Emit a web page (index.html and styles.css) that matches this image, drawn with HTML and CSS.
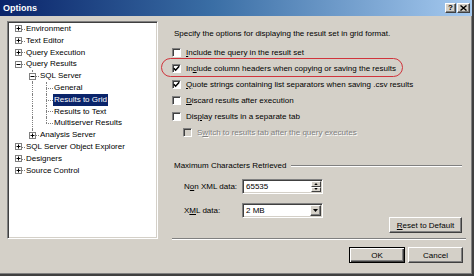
FILE: index.html
```html
<!DOCTYPE html>
<html>
<head>
<meta charset="utf-8">
<title>Options</title>
<link rel="stylesheet" href="styles.css">
</head>
<body>
<div class="window">
  <div class="titlebar">
    <span class="title">Options</span>
    <div class="tbtns">
      <span class="tbtn help">?</span>
      <span class="tbtn close"><svg width="7" height="6" viewBox="0 0 7 6"><path d="M0.5 0.5L6.5 5.5M6.5 0.5L0.5 5.5" stroke="#000" stroke-width="1.4"/></svg></span>
    </div>
  </div>

  <div class="main">
    <div class="tree">
      <div class="row"><span class="cell h"><svg class="exp" width="7" height="7" viewBox="0 0 7 7"><rect x=".5" y=".5" width="6" height="6" fill="#fff" stroke="#808080"/><path d="M1.5 3.5h4M3.5 1.5v4" stroke="#000"/></svg></span><span class="lbl">Environment</span></div>
      <div class="row"><span class="cell h"><svg class="exp" width="7" height="7" viewBox="0 0 7 7"><rect x=".5" y=".5" width="6" height="6" fill="#fff" stroke="#808080"/><path d="M1.5 3.5h4M3.5 1.5v4" stroke="#000"/></svg></span><span class="lbl">Text Editor</span></div>
      <div class="row"><span class="cell h"><svg class="exp" width="7" height="7" viewBox="0 0 7 7"><rect x=".5" y=".5" width="6" height="6" fill="#fff" stroke="#808080"/><path d="M1.5 3.5h4M3.5 1.5v4" stroke="#000"/></svg></span><span class="lbl">Query Execution</span></div>
      <div class="row"><span class="cell h"><svg class="exp" width="7" height="7" viewBox="0 0 7 7"><rect x=".5" y=".5" width="6" height="6" fill="#fff" stroke="#808080"/><path d="M1.5 3.5h4" stroke="#000"/></svg></span><span class="lbl">Query Results</span></div>
      <div class="row"><span class="cell"></span><span class="cell v h"><svg class="exp" width="7" height="7" viewBox="0 0 7 7"><rect x=".5" y=".5" width="6" height="6" fill="#fff" stroke="#808080"/><path d="M1.5 3.5h4" stroke="#000"/></svg></span><span class="lbl">SQL Server</span></div>
      <div class="row"><span class="cell"></span><span class="cell v"></span><span class="cell v h"></span><span class="lbl">General</span></div>
      <div class="row"><span class="cell"></span><span class="cell v"></span><span class="cell v h"></span><span class="lbl sel">Results to Grid</span></div>
      <div class="row"><span class="cell"></span><span class="cell v"></span><span class="cell v h"></span><span class="lbl">Results to Text</span></div>
      <div class="row"><span class="cell"></span><span class="cell v"></span><span class="cell vt h"></span><span class="lbl">Multiserver Results</span></div>
      <div class="row"><span class="cell"></span><span class="cell vt h"><svg class="exp" width="7" height="7" viewBox="0 0 7 7"><rect x=".5" y=".5" width="6" height="6" fill="#fff" stroke="#808080"/><path d="M1.5 3.5h4M3.5 1.5v4" stroke="#000"/></svg></span><span class="lbl">Analysis Server</span></div>
      <div class="row"><span class="cell h"><svg class="exp" width="7" height="7" viewBox="0 0 7 7"><rect x=".5" y=".5" width="6" height="6" fill="#fff" stroke="#808080"/><path d="M1.5 3.5h4M3.5 1.5v4" stroke="#000"/></svg></span><span class="lbl">SQL Server Object Explorer</span></div>
      <div class="row"><span class="cell h"><svg class="exp" width="7" height="7" viewBox="0 0 7 7"><rect x=".5" y=".5" width="6" height="6" fill="#fff" stroke="#808080"/><path d="M1.5 3.5h4M3.5 1.5v4" stroke="#000"/></svg></span><span class="lbl">Designers</span></div>
      <div class="row"><span class="cell h"><svg class="exp" width="7" height="7" viewBox="0 0 7 7"><rect x=".5" y=".5" width="6" height="6" fill="#fff" stroke="#808080"/><path d="M1.5 3.5h4M3.5 1.5v4" stroke="#000"/></svg></span><span class="lbl">Source Control</span></div>
    </div>

    <div class="panel">
      <div class="desc">Specify the options for displaying the result set in grid format.</div>
      <div class="checks">
        <div class="chk"><span class="box"></span><span><u>I</u>nclude the query in the result set</span></div>
        <div class="chk"><span class="box"><svg width="7" height="7" viewBox="0 0 7 7"><path d="M0.8 3.2L2.6 5.2L6.2 1.2" fill="none" stroke="#000" stroke-width="1.5"/></svg></span><span>In<u>c</u>lude column headers when copying or saving the results</span><span class="oval"></span></div>
        <div class="chk"><span class="box"><svg width="7" height="7" viewBox="0 0 7 7"><path d="M0.8 3.2L2.6 5.2L6.2 1.2" fill="none" stroke="#000" stroke-width="1.5"/></svg></span><span><u>Q</u>uote strings containing list separators when saving .csv results</span></div>
        <div class="chk"><span class="box"></span><span><u>D</u>iscard results after execution</span></div>
        <div class="chk"><span class="box"></span><span>Dis<u>p</u>lay results in a separate tab</span></div>
        <div class="chk sub disabled"><span class="box"></span><span>S<u>w</u>itch to results tab after the query executes</span></div>
      </div>

      <div class="group"><span>Maximum Characters Retrieved</span><span class="gline"></span></div>

      <div class="field first">
        <span class="flabel">N<u>o</u>n XML data:</span>
        <div class="input"><span class="val">65535</span><span class="spin"><span class="sbtn"><svg width="5" height="3" viewBox="0 0 5 3"><path d="M2.5 0L5 3H0z" fill="#000"/></svg></span><span class="sbtn"><svg width="5" height="3" viewBox="0 0 5 3"><path d="M0 0H5L2.5 3z" fill="#000"/></svg></span></span></div>
      </div>
      <div class="field second">
        <span class="flabel">X<u>M</u>L data:</span>
        <div class="input"><span class="val">2 MB</span><span class="dd"><svg width="5" height="3" viewBox="0 0 5 3"><path d="M0 0H5L2.5 3z" fill="#000"/></svg></span></div>
      </div>

      <div class="reset-row"><button class="btn reset"><u>R</u>eset to Default</button></div>
      <div class="sep"></div>
    </div>
  </div>

  <div class="footer">
    <button class="btn ok">OK</button>
    <button class="btn cancel">Cancel</button>
  </div>
</div>
</body>
</html>
```

FILE: styles.css
```css
* { box-sizing: border-box; }
html, body { margin: 0; padding: 0; }
body {
  width: 474px;
  height: 276px;
  overflow: hidden;
  background: #d4d0c8;
  font-family: "Liberation Sans", Arial, sans-serif;
  font-size: 8px;
  color: #000;
}
u { text-decoration: underline; text-underline-offset: 1px; }

.window {
  width: 474px;
  height: 276px;
  display: flex;
  flex-direction: column;
  background: #d4d0c8;
  border-right: 2px solid #404040;
  border-bottom: 2px solid #404040;
  box-shadow: inset -1px -1px 0 #808080;
}

/* title bar */
.titlebar {
  height: 16px;
  flex: none;
  display: flex;
  align-items: center;
  justify-content: space-between;
  padding: 0 2px 0 3px;
  background: linear-gradient(to right, #0a246a 0%, #3a6ea5 45%, #a6caf0 100%);
}
.title { color: #fff; font-weight: bold; font-size: 9px; }
.tbtns { display: flex; gap: 1px; }
.tbtn {
  height: 10px;
  background: #d4d0c8;
  border: 1px solid;
  border-color: #fff #404040 #404040 #fff;
  box-shadow: inset -1px -1px 0 #808080;
  display: flex;
  align-items: center;
  justify-content: center;
  font-weight: bold;
  font-size: 8px;
  line-height: 8px;
}
.tbtn.help { width: 11px; }
.tbtn.close { width: 13px; }

/* main */
.main {
  flex: none;
  height: 224px;
  display: flex;
  padding: 5px 6px 0 7px;
}

/* tree */
.tree {
  width: 151px;
  height: 218px;
  flex: none;
  background: #fff;
  border: 1px solid;
  border-color: #808080 #fff #fff #808080;
  box-shadow: inset 1px 1px 0 #404040, inset -1px -1px 0 #d4d0c8;
  padding: 1px 0 0 3px;
}
.row {
  display: flex;
  height: 11.8px;
  line-height: 11.8px;
  white-space: nowrap;
}
.cell {
  width: 14px;
  flex: none;
  height: 100%;
  position: relative;
  display: flex;
  align-items: center;
}
.cell.v::before, .cell.vt::before {
  content: "";
  position: absolute;
  left: 7px;
  top: 0;
  bottom: 0;
  border-left: 1px dotted #808080;
}
.cell.vt::before { bottom: 50%; }
.cell.h::after {
  content: "";
  position: absolute;
  left: 7px;
  right: 0;
  top: 50%;
  border-top: 1px dotted #808080;
}
.exp { position: relative; z-index: 1; margin-left: 4px; display: block; }
.lbl { padding: 0 1px; }
.lbl.sel { background: #0a246a; color: #fff; }

/* right panel */
.panel {
  flex: 1;
  margin-left: 14px;
  display: flex;
  flex-direction: column;
  padding-top: 7px;
}
.desc { line-height: 11px; padding-left: 2px; }
.checks { margin-top: 5px; }
.chk {
  position: relative;
  display: flex;
  align-items: center;
  height: 16px;
  white-space: nowrap;
}
.box {
  width: 9px;
  height: 9px;
  flex: none;
  margin-right: 5px;
  background: #fff;
  border: 1px solid;
  border-color: #808080 #fff #fff #808080;
  box-shadow: inset 1px 1px 0 #404040;
  display: flex;
}
.box svg { display: block; margin: 0; }
.chk.sub { padding-left: 11px; }
.chk.disabled { color: #808080; text-shadow: 1px 1px 0 #fff; }
.chk.disabled .box { background: #d4d0c8; }
.oval {
  position: absolute;
  left: -11px;
  top: -2px;
  width: 242px;
  height: 19px;
  border: 1.5px solid #d0343c;
  border-radius: 10px;
  pointer-events: none;
}

.group {
  display: flex;
  align-items: center;
  margin-top: 20px;
  line-height: 11px;
  padding-left: 2px;
}
.gline {
  flex: 1;
  height: 2px;
  border-top: 1px solid #808080;
  border-bottom: 1px solid #fff;
  margin: 0 4px 0 5px;
}

.field {
  display: flex;
  align-items: center;
  height: 15px;
  padding-left: 12px;
}
.field.first { margin-top: 8px; }
.field.second { margin-top: 9px; }
.flabel { width: 58px; flex: none; }
.input {
  width: 81px;
  height: 15px;
  background: #fff;
  border: 1px solid;
  border-color: #808080 #fff #fff #808080;
  box-shadow: inset 1px 1px 0 #404040, inset -1px -1px 0 #d4d0c8;
  display: flex;
  align-items: stretch;
  padding: 1px 1px 1px 3px;
}
.val { flex: 1; line-height: 11px; }
.spin { width: 10px; display: flex; flex-direction: column; }
.sbtn, .dd {
  flex: 1;
  background: #d4d0c8;
  border: 1px solid;
  border-color: #fff #404040 #404040 #fff;
  display: flex;
  align-items: center;
  justify-content: center;
}
.sbtn svg { width: 4px; height: 2px; }
.dd { flex: none; width: 11px; box-shadow: inset -1px -1px 0 #808080; }

.reset-row {
  display: flex;
  justify-content: flex-end;
  margin-top: -1px;
  padding-right: 4px;
}
.btn {
  height: 16px;
  padding: 0;
  font: inherit;
  color: #000;
  background: #d4d0c8;
  border: 1px solid;
  border-color: #fff #404040 #404040 #fff;
  box-shadow: inset -1px -1px 0 #808080;
  display: flex;
  align-items: center;
  justify-content: center;
}
.reset { width: 73px; }
.sep {
  margin-top: auto;
  height: 2px;
  border-top: 1px solid #808080;
  border-bottom: 1px solid #fff;
}

.footer {
  display: flex;
  justify-content: flex-end;
  gap: 3px;
  padding: 7px 9px 0 0;
}
.ok {
  width: 56px;
  border: 1px solid #000;
  box-shadow: inset 1px 1px 0 #fff, inset -1px -1px 0 #404040, inset -2px -2px 0 #808080;
}
.cancel { width: 55px; }
```
